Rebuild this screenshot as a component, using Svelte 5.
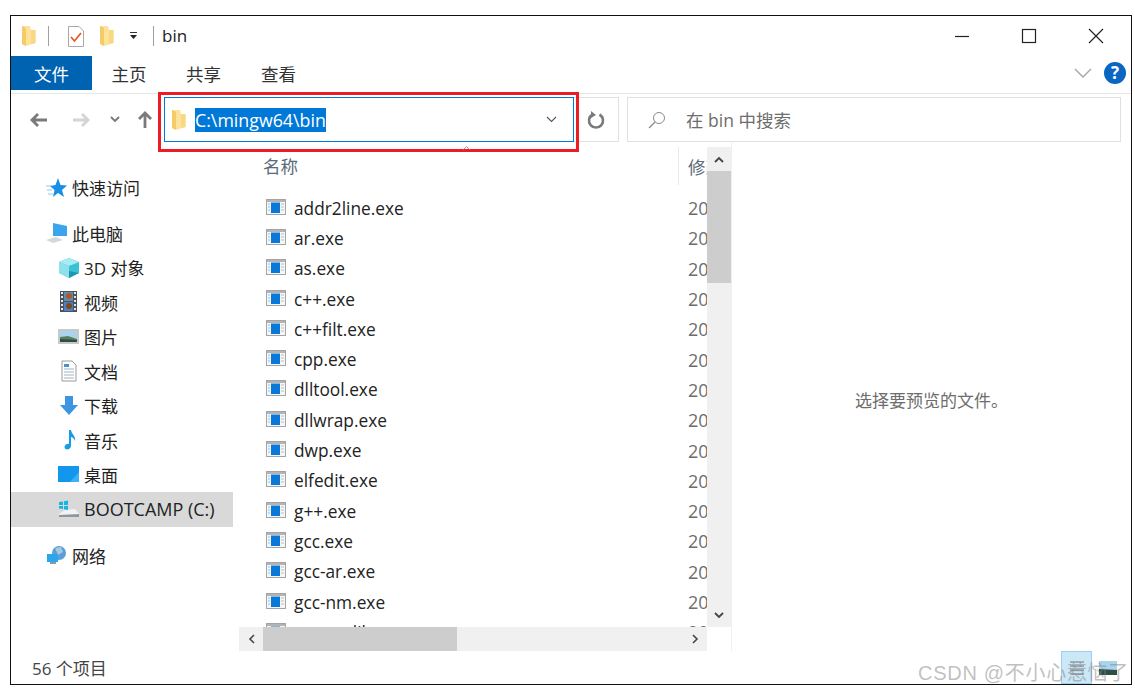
<script>
  const files = ['addr2line.exe', 'ar.exe', 'as.exe', 'c++.exe', 'c++filt.exe', 'cpp.exe', 'dlltool.exe', 'dllwrap.exe', 'dwp.exe', 'elfedit.exe', 'g++.exe', 'gcc.exe', 'gcc-ar.exe', 'gcc-nm.exe', 'gcc-ranlib.exe'];
  const places = [
    { label: '3D 对象', icon: 'cube' },
    { label: '视频', icon: 'film' },
    { label: '图片', icon: 'photo' },
    { label: '文档', icon: 'doc' },
    { label: '下载', icon: 'down' },
    { label: '音乐', icon: 'note' },
    { label: '桌面', icon: 'desk' },
    { label: 'BOOTCAMP (C:)', icon: 'drive', active: true }
  ];
</script>

{#snippet folder()}
  <svg width="14" height="22" viewBox="0 0 14 22">
    <path d="M0 1 H8 L9 5 H13.500 V18 L4 21 L0 19 Z" fill="#fde39a" />
    <path d="M0 1 L4 3 V21 L0 19 Z" fill="#f4cb66" />
    <path d="M9 5 H13.500 V18 L9 19 Z" fill="#f9d883" />
  </svg>
{/snippet}

{#snippet placeIcon(name)}
  <svg class="place-icon" width="22" height="22" viewBox="0 0 22 22">
    {#if name === 'cube'}
      <path d="M11 1 L21 5 V16 L11 21 L1 16 V5 Z" fill="#3cc0d4" />
      <path d="M11 1 L21 5 L11 9 L1 5 Z" fill="#a6ecf2" />
      <path d="M1 5 L11 9 V21 L1 16 Z" fill="#8fe0ea" />
      <path d="M11 14 L21 16 L11 21 Z" fill="#1d97b4" />
    {:else if name === 'film'}
      <rect x="2" y="0" width="17" height="21" fill="#4a5260" />
      <rect x="6" y="1" width="9" height="9" fill="#5f8fb0" />
      <rect x="6" y="11" width="9" height="9" fill="#4f7fc0" />
      <circle cx="11" cy="5" r="3" fill="#b2552c" />
      <circle cx="11" cy="15" r="3" fill="#7a4a20" />
      <path d="M3 2 H5 M3 6 H5 M3 10 H5 M3 14 H5 M3 18 H5 M16 2 H18 M16 6 H18 M16 10 H18 M16 14 H18 M16 18 H18" stroke="#e8e8e8" stroke-width="2" />
    {:else if name === 'photo'}
      <rect x="0" y="3" width="21" height="15" fill="#c8c8c8" />
      <rect x="2" y="5" width="17" height="11" fill="#a8d4ee" />
      <path d="M2 11 L10 10 L19 13 V16 H2 Z" fill="#5d7d5c" />
      <path d="M2 13 L19 14 V16 H2 Z" fill="#2e4f45" />
    {:else if name === 'doc'}
      <path d="M4 1 H14 L18 5 V21 H4 Z" fill="#fff" stroke="#9a9a9a" />
      <path d="M6 9 H16 M6 12 H16 M6 15 H16 M6 18 H16" stroke="#9db4c8" />
      <rect x="6" y="4" width="5" height="3" fill="#4a90d0" />
    {:else if name === 'down'}
      <path d="M7 1 H15 V10 H20 L11 20 L2 10 H7 Z" fill="#3d94e0" />
    {:else if name === 'note'}
      <path d="M11 1 H13 C14 6 18 7 17 12 C16 9 14 8 13 8 V17 C13 20 9 21 7.500 20 C5 18 8 14 11 15 Z" fill="#1a9be8" />
    {:else if name === 'desk'}
      <rect x="0" y="2" width="21" height="16" fill="#1296ee" />
      <path d="M12 18 L21 8 V18 Z" fill="#3fb0f5" />
    {:else}
      <path d="M7 12 L17 11 L21 16 V19 H1 V16 Z" fill="#f0f2f3" />
      <path d="M1 17 L21 16 V19 H1 Z" fill="#8f979d" />
      <path d="M1 4 L5 3.500 V7 H1 Z M6 3.300 L10 2.500 V7 H6 Z M1 8 H5 V11 L1 10.500 Z M6 8 H10 V12 L6 11.300 Z" fill="#19b3e6" />
    {/if}
  </svg>
{/snippet}

{#snippet exeIcon()}
  <svg class="exe-icon" width="20" height="16" viewBox="0 0 20 16">
    <rect x="0.500" y="0.500" width="19" height="15" fill="#f6f6f6" stroke="#a4a4a4" />
    <rect x="1" y="1" width="18" height="2" fill="#b4b4b4" />
    <rect x="5" y="3.500" width="9" height="10.500" fill="#0a78d8" />
    <path d="M2 5 H4 M2 8 H4 M2 11 H4" stroke="#8fc0e8" />
    <path d="M15 5 H18 M15 8 H18 M15 11 H18" stroke="#b9c0c6" />
  </svg>
{/snippet}

<div class="page">
  <div class="window">
    <header class="titlebar">
      <div class="quick">
        {@render folder()}
        <span class="sep"></span>
        <svg class="check" width="16" height="21" viewBox="0 0 16 21">
          <path d="M0.500 0.500 H11 L15.500 5 V20.500 H0.500 Z" fill="#fff" stroke="#a8a8a8" />
          <path d="M3 11 L6.500 15 L13 7" fill="none" stroke="#e2572a" stroke-width="1.700" />
        </svg>
        {@render folder()}
        <svg class="drop" width="9" height="8" viewBox="0 0 9 8">
          <path d="M1 0.500 H8" stroke="#333" />
          <path d="M1 3 H8 L4.500 7 Z" fill="#222" />
        </svg>
        <span class="sep last"></span>
        <span class="title">bin</span>
      </div>
      <div class="controls">
        <svg width="16" height="16" viewBox="0 0 16 16"><path d="M1 8.500 H15" stroke="#222" stroke-width="1.200" /></svg>
        <svg width="16" height="16" viewBox="0 0 16 16"><rect x="1.500" y="1.500" width="13" height="13" fill="none" stroke="#222" stroke-width="1.200" /></svg>
        <svg width="16" height="16" viewBox="0 0 16 16"><path d="M1 1 L15 15 M15 1 L1 15" stroke="#222" stroke-width="1.200" /></svg>
      </div>
    </header>

    <nav class="tabs">
      <span class="tab file">文件</span>
      <span class="tab">主页</span>
      <span class="tab">共享</span>
      <span class="tab">查看</span>
      <span class="tabs-right">
        <svg width="18" height="11" viewBox="0 0 18 11"><path d="M1 1 L9 9 L17 1" fill="none" stroke="#a5a5a5" stroke-width="1.400" /></svg>
        <span class="help">?</span>
      </span>
    </nav>

    <div class="toolbar">
      <div class="arrows">
        <svg class="back" width="18" height="14" viewBox="0 0 18 14"><path d="M8 1 L2 7 L8 13 M2 7 H17" fill="none" stroke="#7a7a7a" stroke-width="2.800" /></svg>
        <svg class="forward" width="18" height="14" viewBox="0 0 18 14"><path d="M10 1 L16 7 L10 13 M16 7 H1" fill="none" stroke="#d4d4d4" stroke-width="2.800" /></svg>
        <svg class="recent" width="10" height="7" viewBox="0 0 10 7"><path d="M1 1 L5 5 L9 1" fill="none" stroke="#777" stroke-width="1.800" /></svg>
        <svg class="up" width="14" height="18" viewBox="0 0 14 18"><path d="M1 8 L7 2 L13 8 M7 2 V17" fill="none" stroke="#7a7a7a" stroke-width="2.800" /></svg>
      </div>
      <div class="address">
        <div class="address-box">
          {@render folder()}
          <span class="path">C:\mingw64\bin</span>
          <svg class="chev" width="11" height="7" viewBox="0 0 11 7"><path d="M1 1 L5.500 5.500 L10 1" fill="none" stroke="#555" stroke-width="1.100" /></svg>
        </div>
        <div class="refresh">
          <svg width="18" height="18" viewBox="0 0 18 18">
            <path d="M5.500 3.500 A7 7 0 1 0 12.500 3.500" fill="none" stroke="#7a7a7a" stroke-width="2.600" />
            <path d="M4 0 L9 4 L4 7 Z" fill="#7a7a7a" />
          </svg>
        </div>
      </div>
      <div class="search">
        <svg width="18" height="18" viewBox="0 0 18 18"><circle cx="11" cy="7" r="5.500" fill="none" stroke="#8a8a8a" /><path d="M7 11 L1 17" stroke="#8a8a8a" stroke-width="1.300" /></svg>
        <span>在 bin 中搜索</span>
      </div>
      <div class="callout"></div>
    </div>

    <div class="main">
      <aside class="nav">
        <div class="nav-row top first">
          <svg class="place-icon" width="22" height="22" viewBox="0 0 22 22">
            <path d="M12 1 L14.500 8 L21 8.500 L16 13 L18 20 L12 16 L7 20 L8.500 13 L4 9 L9.500 8 Z" fill="#1a8fe8" />
            <path d="M0 9 H5 M1 13 H6 M2 17 H7" stroke="#8cc8f4" />
          </svg>
          <span>快速访问</span>
        </div>
        <div class="nav-row top">
          <svg class="place-icon" width="22" height="22" viewBox="0 0 22 22">
            <path d="M7 1 L21 4 V14 L7 14 Z" fill="#3aa5ec" />
            <path d="M0 18 L10 15 L17 18 L7 21 Z" fill="#d5d8da" />
          </svg>
          <span>此电脑</span>
        </div>
        {#each places as place}
          <div class="nav-row" class:active={place.active}>
            {@render placeIcon(place.icon)}
            <span>{place.label}</span>
          </div>
        {/each}
        <div class="nav-row top last">
          <svg class="place-icon" width="22" height="22" viewBox="0 0 22 22">
            <circle cx="13" cy="8" r="7" fill="#5a9fd8" />
            <path d="M9 3 L15 2 L17 7 L12 10 Z" fill="#a8c8e0" />
            <rect x="1" y="9" width="11" height="8" fill="#2ba6ea" />
            <rect x="4" y="17" width="6" height="2" fill="#8a9aa8" />
          </svg>
          <span>网络</span>
        </div>
      </aside>

      <section class="list">
        <div class="list-body">
          <div class="list-inner">
            <div class="head">
              <span class="head-name">名称</span>
              <svg class="sort" width="7" height="4" viewBox="0 0 7 4"><path d="M0.500 3.500 L3.500 0.500 L6.500 3.500" fill="none" stroke="#a0a0a0" /></svg>
              <span class="head-date">修改日期</span>
            </div>
            <div class="rows">
              {#each files as file}
                <div class="row">
                  <span class="name">{@render exeIcon()}{file}</span>
                  <span class="date">2021/3/8</span>
                </div>
              {/each}
            </div>
          </div>
          <div class="vbar">
            <span class="bar-btn">
              <svg width="10" height="7" viewBox="0 0 10 7"><path d="M1 6 L5 2 L9 6" fill="none" stroke="#444" stroke-width="1.800" /></svg>
            </span>
            <span class="vthumb"></span>
            <span class="bar-btn down">
              <svg width="10" height="7" viewBox="0 0 10 7"><path d="M1 1 L5 5 L9 1" fill="none" stroke="#444" stroke-width="1.800" /></svg>
            </span>
          </div>
        </div>
        <div class="hbar">
          <span class="bar-btn side">
            <svg width="7" height="10" viewBox="0 0 7 10"><path d="M6 1 L2 5 L6 9" fill="none" stroke="#444" stroke-width="1.600" /></svg>
          </span>
          <span class="hthumb"></span>
          <span class="bar-btn side end">
            <svg width="7" height="10" viewBox="0 0 7 10"><path d="M1 1 L5 5 L1 9" fill="none" stroke="#444" stroke-width="1.600" /></svg>
          </span>
        </div>
      </section>

      <div class="preview">选择要预览的文件。</div>
    </div>

    <footer class="status">
      <span>56 个项目</span>
      <span class="views">
        <span class="view on">
          <svg width="18" height="18" viewBox="0 0 18 18"><path d="M2 3 H16 M2 7 H16 M2 11 H16 M2 15 H16" stroke="#8f9aa4" stroke-width="1.500" /></svg>
        </span>
        <span class="view">
          <svg width="20" height="18" viewBox="0 0 20 18"><rect x="1" y="2" width="18" height="14" fill="#a8d4ee" /><path d="M1 10 L19 11 V16 H1 Z" fill="#2e4f45" /></svg>
        </span>
      </span>
    </footer>
  </div>
  <div class="watermark">CSDN @不小心惹恼了</div>
</div>

<style>
  :global(body) {
    background: #fff;
  }

  .page {
    position: relative;
    width: 1135px;
    height: 692px;
    padding: 15px 3px 7px 10px;
    box-sizing: border-box;
    font-family: "Open Sans", "Noto Sans CJK SC", sans-serif;
    overflow: hidden;
  }

  .window {
    height: 100%;
    box-sizing: border-box;
    border: 1.5px solid #111;
    display: flex;
    flex-direction: column;
    background: #fff;
    color: #222;
  }

  svg {
    display: block;
    flex: none;
  }

  .titlebar {
    height: 40px;
    flex: none;
    display: flex;
    align-items: center;
    justify-content: space-between;
    padding: 0 27px 0 11px;
  }

  .quick {
    display: flex;
    align-items: center;
  }

  .sep {
    width: 1px;
    height: 20px;
    background: #a0a0a0;
    margin: 0 19px 0 12px;
  }

  .sep.last {
    margin: 0 8px 0 15px;
  }

  .check {
    margin-right: 16px;
  }

  .drop {
    margin-left: 15px;
  }

  .title {
    font-size: 17px;
    line-height: 20px;
  }

  .controls {
    display: flex;
    gap: 51px;
  }

  .tabs {
    height: 34px;
    flex: none;
    display: flex;
    font-size: 17.500px;
    border-bottom: 1px solid #e6e6e6;
    padding-bottom: 3px;
  }

  .tab {
    width: 75px;
    display: flex;
    align-items: center;
    justify-content: center;
    color: #333;
    padding-top: 1px;
    box-sizing: border-box;
  }

  .tab.file {
    width: 81px;
    background: #0063b1;
    color: #fff;
  }

  .tab:nth-child(2) {
    width: 74px;
  }

  .tabs-right {
    margin-left: auto;
    display: flex;
    align-items: center;
    gap: 12px;
    padding-right: 5px;
  }

  .help {
    width: 22px;
    height: 22px;
    border-radius: 50%;
    background: #0a66c2;
    color: #fff;
    font-size: 17px;
    font-weight: 700;
    line-height: 22px;
    text-align: center;
  }

  .toolbar {
    position: relative;
    height: 45px;
    flex: none;
    margin-top: 3px;
    display: flex;
    padding-right: 10px;
  }

  .arrows {
    width: 153px;
    flex: none;
    display: flex;
    align-items: center;
    padding-left: 19px;
    box-sizing: border-box;
  }

  .forward {
    margin-left: 24px;
  }

  .recent {
    margin-left: 20px;
  }

  .up {
    margin-left: 18px;
  }

  .address {
    width: 455px;
    flex: none;
    display: flex;
  }

  .address-box {
    width: 410px;
    box-sizing: border-box;
    border: 1px solid #0078d7;
    display: flex;
    align-items: center;
    padding: 0 16px 0 7px;
    font-size: 17.800px;
  }

  .path {
    margin-left: 9px;
    background: #0078d7;
    color: #fff;
    line-height: 23px;
    padding-top: 1px;
  }

  .chev {
    margin-left: auto;
  }

  .refresh {
    flex: 1;
    border: 1px solid #e0e0e0;
    border-left: 0;
    display: flex;
    align-items: center;
    justify-content: center;
  }

  .search {
    margin-left: 8px;
    flex: 1;
    border: 1px solid #e0e0e0;
    display: flex;
    align-items: center;
    padding-left: 20px;
    gap: 20px;
    font-size: 17.500px;
    color: #6d6d6d;
  }

  .callout {
    position: absolute;
    left: 147px;
    top: -5px;
    width: 421px;
    height: 60px;
    box-sizing: border-box;
    border: 3px solid #ed1c24;
  }

  .main {
    flex: 1;
    min-height: 0;
    display: flex;
  }

  .nav {
    width: 226px;
    flex: none;
    padding-top: 28.500px;
    box-sizing: border-box;
    font-size: 17px;
  }

  .nav-row {
    height: 34.500px;
    width: 222px;
    display: flex;
    align-items: center;
    padding-left: 47px;
    box-sizing: border-box;
    color: #222;
  }

  .nav-row.top {
    padding-left: 35px;
  }

  .nav-row.first {
    margin-bottom: 11px;
  }

  .nav-row.last {
    margin-top: 12px;
  }

  .nav-row.active {
    background: #d9d9d9;
    font-size: 18px;
  }

  .place-icon {
    margin-right: 4px;
  }

  .list {
    width: 494px;
    flex: none;
    display: flex;
    flex-direction: column;
    padding-left: 2px;
    box-sizing: border-box;
  }

  .list-body {
    height: 485px;
    flex: none;
    display: flex;
  }

  .list-inner {
    height: 100%;
    width: 468px;
    flex: none;
    overflow: hidden;
  }

  .head {
    position: relative;
    height: 38px;
    margin-top: 5px;
    display: flex;
    align-items: center;
    font-size: 17.500px;
    color: #5a6a7a;
    white-space: nowrap;
  }

  .head-name {
    width: 440px;
    flex: none;
    padding-left: 24px;
    box-sizing: border-box;
    border-right: 1px solid #e8e8e8;
    height: 100%;
    line-height: 38px;
  }

  .sort {
    position: absolute;
    left: 224px;
    top: -1px;
  }

  .head-date {
    margin-left: 9px;
    flex: none;
  }

  .rows {
    margin-top: 8px;
  }

  .row {
    height: 30.300px;
    display: flex;
    align-items: center;
    font-size: 17.300px;
    white-space: nowrap;
  }

  .name {
    width: 449px;
    flex: none;
    display: flex;
    align-items: center;
    padding-left: 27px;
    box-sizing: border-box;
  }

  .exe-icon {
    margin-right: 8px;
    margin-top: -3px;
  }

  .date {
    flex: none;
    font-size: 18px;
    color: #6d6d6d;
  }

  .vbar {
    width: 24px;
    flex: none;
    margin-top: 5px;
    background: #f0f0f0;
    display: flex;
    flex-direction: column;
  }

  .vthumb {
    height: 112px;
    background: #cdcdcd;
  }

  .bar-btn {
    height: 24px;
    display: flex;
    align-items: center;
    justify-content: center;
    flex: none;
  }

  .bar-btn.down {
    margin-top: auto;
  }

  .hbar {
    height: 24px;
    flex: none;
    background: #f0f0f0;
    display: flex;
    width: 468px;
  }

  .bar-btn.side {
    width: 24px;
  }

  .bar-btn.end {
    margin-left: auto;
  }

  .hthumb {
    width: 194px;
    background: #cdcdcd;
  }

  .preview {
    flex: 1;
    display: flex;
    align-items: center;
    justify-content: center;
    font-size: 17px;
    color: #6d6d6d;
    padding-top: 6px;
    box-sizing: border-box;
    border-left: 1px solid #f0f0f0;
  }

  .status {
    height: 33px;
    flex: none;
    display: flex;
    align-items: center;
    justify-content: space-between;
    padding-left: 21px;
    font-size: 17px;
    color: #444;
  }

  .views {
    display: flex;
    height: 100%;
    padding-right: 8px;
  }

  .view {
    width: 31px;
    display: flex;
    align-items: center;
    justify-content: center;
    box-sizing: border-box;
  }

  .view.on {
    background: #cce8f7;
    border: 1px solid #99d1ef;
  }

  .watermark {
    position: absolute;
    right: 6px;
    bottom: 8px;
    font-family: "Liberation Sans", "Noto Sans CJK SC", sans-serif;
    font-size: 20px;
    letter-spacing: 0.7px;
    line-height: 22px;
    color: rgba(130, 130, 130, 0.5);
    white-space: nowrap;
  }
</style>
